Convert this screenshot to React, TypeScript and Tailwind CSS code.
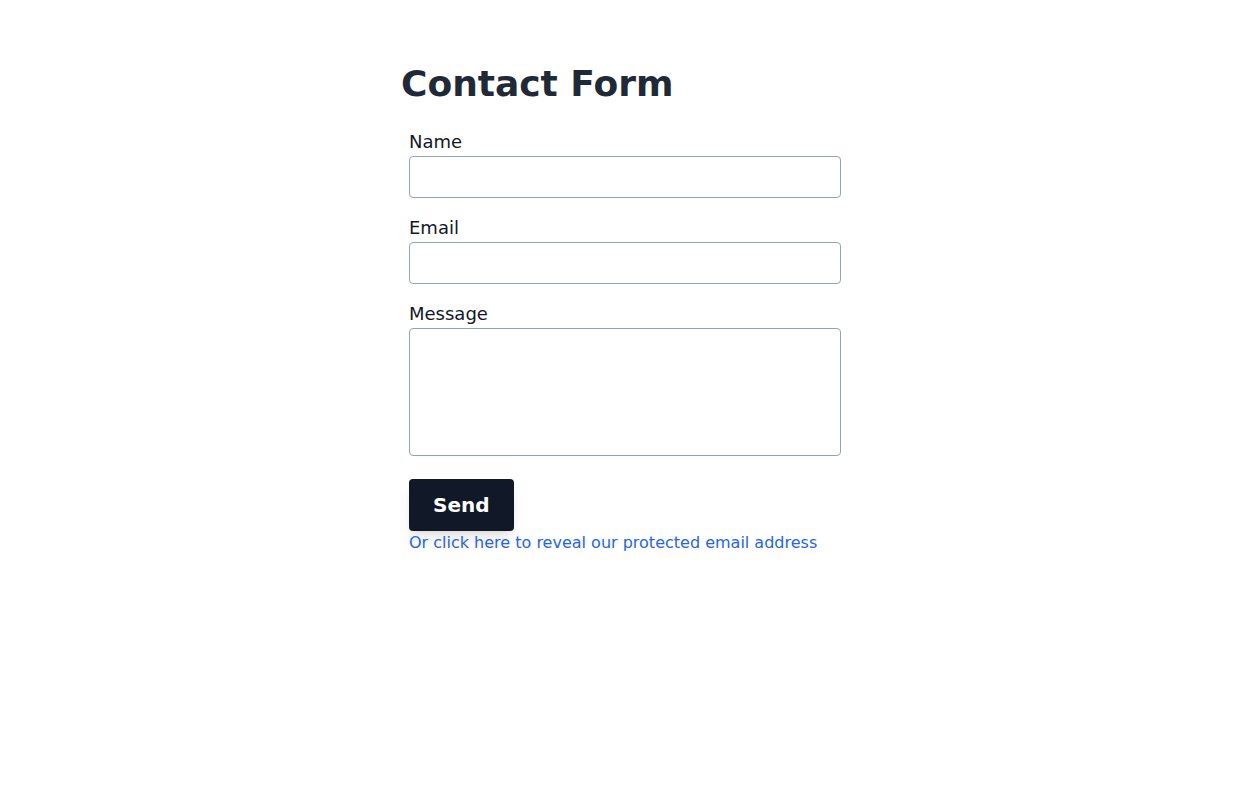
import React from "react";

export default function App() {
  return (
    <div className="min-h-screen bg-white" style={{ fontFamily: '"DejaVu Sans", sans-serif' }}>
      <div className="mx-auto max-w-md pt-[64px]">
        <h1 className="mb-6 text-4xl font-bold text-[#1f2937]">Contact Form</h1>
        <form className="px-2" onSubmit={(e) => e.preventDefault()}>
          <div className="mb-4">
            <label className="block text-lg text-[#111827]">Name</label>
            <input type="text" className="block h-[42px] w-full rounded border border-[#94a3b8] px-3" />
          </div>
          <div className="mb-4">
            <label className="block text-lg text-[#111827]">Email</label>
            <input type="email" className="block h-[42px] w-full rounded border border-[#94a3b8] px-3" />
          </div>
          <div className="mb-[23px]">
            <label className="block text-lg text-[#111827]">Message</label>
            <textarea className="block h-[128px] w-full resize-none rounded border border-[#94a3b8] px-3" />
          </div>
          <button type="submit" className="rounded bg-[#111827] px-6 py-3 text-xl font-bold text-white shadow-lg">
            Send
          </button>
          <div>
            <a href="#" className="text-base text-[#2563eb]">Or click here to reveal our protected email address</a>
          </div>
        </form>
      </div>
    </div>
  );
}
